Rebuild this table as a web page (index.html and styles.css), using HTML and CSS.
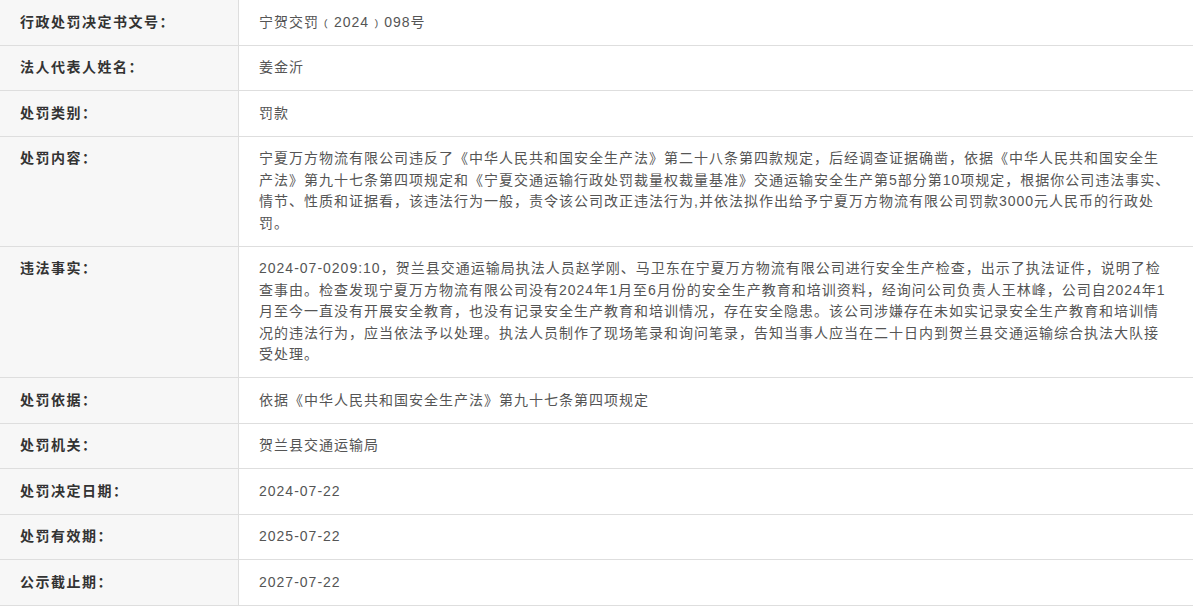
FILE: index.html
```html
<!DOCTYPE html>
<html lang="zh-CN">
<head>
  <meta charset="UTF-8">
  <meta name="viewport" content="width=device-width, initial-scale=1.0">
  <title>行政处罚决定书</title>
  <link rel="stylesheet" href="styles.css">
</head>
<body>
  <table class="penalty-table">
    <tr>
      <th>行政处罚决定书文号：</th>
      <td>宁贺交罚﹙2024﹚098号</td>
    </tr>
    <tr>
      <th>法人代表人姓名：</th>
      <td>姜金沂</td>
    </tr>
    <tr>
      <th>处罚类别：</th>
      <td>罚款</td>
    </tr>
    <tr>
      <th>处罚内容：</th>
      <td><div class="text">宁夏万方物流有限公司违反了《中华人民共和国安全生产法》第二十八条第四款规定，后经调查证据确凿，依据《中华人民共和国安全生产法》第九十七条第四项规定和《宁夏交通运输行政处罚裁量权裁量基准》交通运输安全生产第5部分第10项规定，根据你公司违法事实、情节、性质和证据看，该违法行为一般，责令该公司改正违法行为,并依法拟作出给予宁夏万方物流有限公司罚款3000元人民币的行政处罚。</div></td>
    </tr>
    <tr>
      <th>违法事实：</th>
      <td><div class="text">2024-07-0209:10，贺兰县交通运输局执法人员赵学刚、马卫东在宁夏万方物流有限公司进行安全生产检查，出示了执法证件，说明了检查事由。检查发现宁夏万方物流有限公司没有2024年1月至6月份的安全生产教育和培训资料，经询问公司负责人王林峰，公司自2024年1月至今一直没有开展安全教育，也没有记录安全生产教育和培训情况，存在安全隐患。该公司涉嫌存在未如实记录安全生产教育和培训情况的违法行为，应当依法予以处理。执法人员制作了现场笔录和询问笔录，告知当事人应当在二十日内到贺兰县交通运输综合执法大队接受处理。</div></td>
    </tr>
    <tr>
      <th>处罚依据：</th>
      <td>依据《中华人民共和国安全生产法》第九十七条第四项规定</td>
    </tr>
    <tr>
      <th>处罚机关：</th>
      <td>贺兰县交通运输局</td>
    </tr>
    <tr>
      <th>处罚决定日期：</th>
      <td>2024-07-22</td>
    </tr>
    <tr>
      <th>处罚有效期：</th>
      <td>2025-07-22</td>
    </tr>
    <tr>
      <th>公示截止期：</th>
      <td>2027-07-22</td>
    </tr>
  </table>
</body>
</html>
```

FILE: styles.css
```css
body {
  margin: 0;
  background: #fff;
  font-family: "Liberation Sans", "Noto Sans CJK SC", sans-serif;
  font-size: 14px;
  letter-spacing: 1px;
}
.penalty-table {
  width: 100%;
  border-collapse: collapse;
}
.penalty-table th,
.penalty-table td {
  padding: 11.5px 20px;
  line-height: 21.5px;
  text-align: left;
  vertical-align: top;
  border-bottom: 1px solid #dedede;
}
.penalty-table th {
  width: 198px;
  background: #f7f7f7;
  color: #333;
  font-weight: bold;
  letter-spacing: 1.5px;
  border-right: 1px solid #dedede;
}
.penalty-table td {
  color: #555;
}
/* 固定宽度，让换行跟原页面一致 */
.text {
  max-width: 912.5px;
}
```
